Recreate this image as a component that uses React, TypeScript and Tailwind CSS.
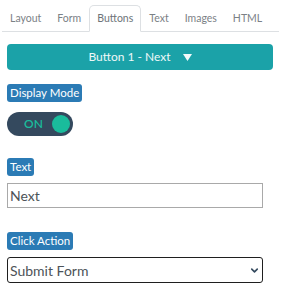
import { ChevronDown } from 'lucide-react';

const tabs = ['Layout', 'Form', 'Buttons', 'Text', 'Images', 'HTML'];

function Badge({ children, className = '' }: { children: string; className?: string }) {
  return (
    <div className={`flex h-[18px] w-fit items-center rounded-[3px] bg-[#2b7bb5] px-[3px] text-[11.5px] leading-none text-white ${className}`}>
      {children}
    </div>
  );
}

export default function App() {
  return (
    <div className="h-[300px] w-[281px] bg-white pt-[5px] font-['Lato',sans-serif]">
      {/* Tabs */}
      <div className="mx-[2px] flex border-b border-[#dde0e3]">
        {tabs.map(t => (
          <div
            key={t}
            className={`-mb-px flex h-[27px] items-center rounded-t-[5px] border px-[7px] text-[10.5px] ${
              t === 'Buttons' ? 'border-[#dde0e3] border-b-white bg-white text-[#6d7378]' : 'border-transparent text-[#7b8186]'
            }`}
          >
            {t}
          </div>
        ))}
      </div>

      <div className="px-[7px]">
        <button className="mt-[12px] flex h-[26px] w-[266px] items-center justify-center gap-[12px] rounded-[4px] bg-[#1ba2a8] text-[12px] text-[#eef8f8]">
          Button 1 - Next
          <svg width="9" height="7" viewBox="0 0 9 7">
            <path d="M0 0h9L4.5 7z" fill="#f2fafa" />
          </svg>
        </button>

        <Badge className="mt-[14px]">Display Mode</Badge>

        <div className="mt-[10px] flex h-[24px] w-[66px] items-center justify-between rounded-full bg-[#34495e] pl-[17px] pr-[3px]">
          <span className="text-[12px] font-semibold leading-none text-[#1abc9c]">ON</span>
          <span className="h-[18px] w-[18px] rounded-full bg-[#1abc9c]" />
        </div>

        <Badge className="mt-[22px]">Text</Badge>

        <div className="mt-[7px] flex h-[25px] w-[256px] items-center border border-[#a9a9a9] px-[2px] text-[14px] text-[#4d5358]">
          Next
        </div>

        <Badge className="mt-[24px]">Click Action</Badge>

        <div className="mt-[7px] flex h-[26px] w-[256px] items-center justify-between rounded-[3px] border border-[#1f1f1f] pl-[2px] pr-[2px] text-[14px] text-[#4d5358]">
          Submit Form
          <ChevronDown size={11} strokeWidth={3.5} className="text-[#34495e]" />
        </div>
      </div>
    </div>
  );
}
